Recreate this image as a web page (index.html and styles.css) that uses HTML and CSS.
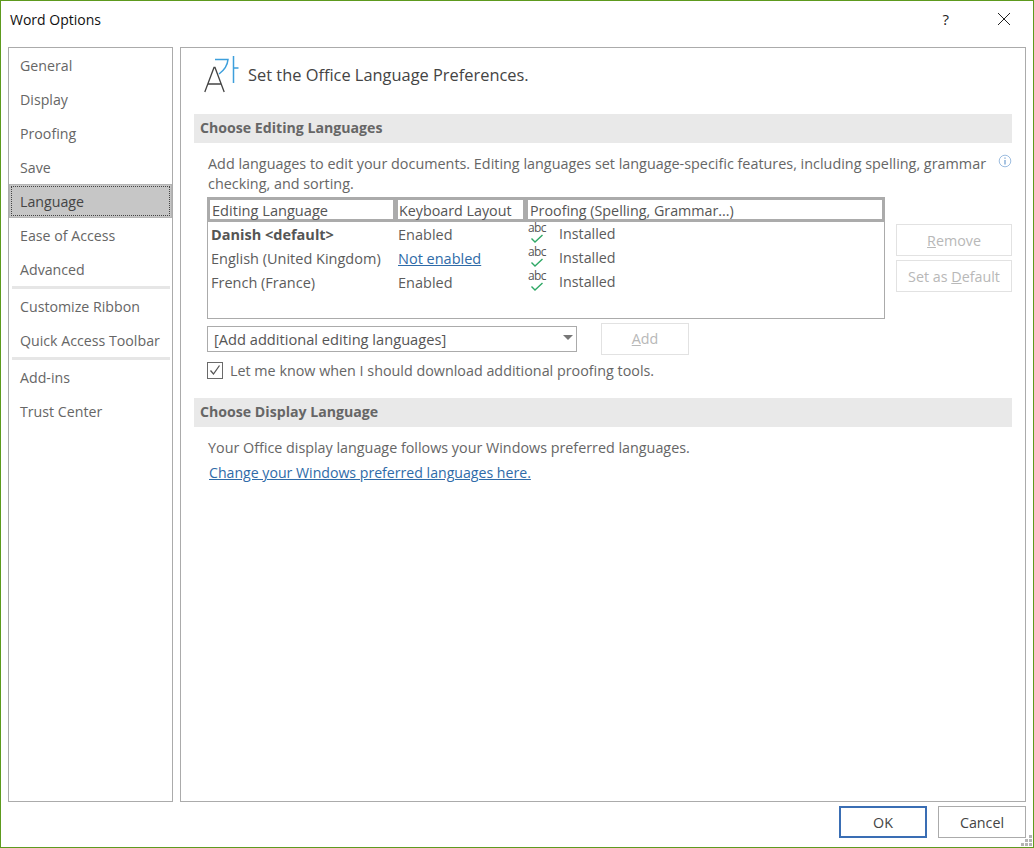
FILE: index.html
```html
<!DOCTYPE html>
<html lang="en">
<head>
<meta charset="utf-8">
<title>Word Options</title>
<link rel="stylesheet" href="styles.css">
</head>
<body>
<div class="window">
  <header class="titlebar">
    <span class="wintitle">Word Options</span>
    <span class="help">?</span>
    <svg class="close" width="14" height="14" viewBox="0 0 14 14"><path d="M1 1 L13 13 M13 1 L1 13" stroke="#222" stroke-width="1" fill="none"/></svg>
  </header>
  <div class="content">
    <nav class="nav">
      <a class="navitem">General</a>
      <a class="navitem">Display</a>
      <a class="navitem">Proofing</a>
      <a class="navitem">Save</a>
      <a class="navitem active"><span class="focus">Language</span></a>
      <a class="navitem">Ease of Access</a>
      <a class="navitem">Advanced</a>
      <div class="navsep"></div>
      <a class="navitem">Customize Ribbon</a>
      <a class="navitem">Quick Access Toolbar</a>
      <div class="navsep"></div>
      <a class="navitem">Add-ins</a>
      <a class="navitem">Trust Center</a>
    </nav>
    <main class="main">
      <div class="pagehead">
        <svg class="langicon" width="36" height="38" viewBox="0 0 36 38" fill="none">
          <path d="M0.800 36 L10 11.500 L11 11.500 L20.200 36 M3.500 28 L17.500 28" stroke="#444" stroke-width="1.300"/>
          <path d="M11 3.500 L24 3.500 C23.500 9 20.500 14 15 18 M29.500 0 L29.500 27 M29.500 12 L34.500 12" stroke="#3d9fdc" stroke-width="1.500"/>
        </svg>
        <span class="pagetitle">Set the Office Language Preferences.</span>
      </div>
      <h2 class="sectionbar">Choose Editing Languages</h2>
      <div class="descrow">
        <p class="desc">Add languages to edit your documents. Editing languages set language-specific features, including spelling, grammar checking, and sorting.</p>
        <svg class="info" width="14" height="14" viewBox="0 0 14 14" fill="none">
          <circle cx="7" cy="7" r="5.800" stroke="#9dbde0" stroke-width="1"/>
          <path d="M7 6 L7 10.500 M7 3.500 L7 4.800" stroke="#6f9dcf" stroke-width="1.200"/>
        </svg>
      </div>
      <div class="editrow">
        <div class="langtable">
          <div class="thead">
            <div class="th th1">Editing Language</div>
            <div class="th th2">Keyboard Layout</div>
            <div class="th th3">Proofing (Spelling, Grammar...)</div>
          </div>
          <div class="trow">
            <div class="td1 strong">Danish &lt;default&gt;</div>
            <div class="td2">Enabled</div>
            <div class="td3"><span class="abc"><span class="abctext">abc</span><svg width="14" height="9" viewBox="0 0 14 9" fill="none"><path d="M1.500 4.500 L5 8 L12.500 1" stroke="#2fa866" stroke-width="1.400"/></svg></span>Installed</div>
          </div>
          <div class="trow">
            <div class="td1">English (United Kingdom)</div>
            <div class="td2"><span class="link">Not enabled</span></div>
            <div class="td3"><span class="abc"><span class="abctext">abc</span><svg width="14" height="9" viewBox="0 0 14 9" fill="none"><path d="M1.500 4.500 L5 8 L12.500 1" stroke="#2fa866" stroke-width="1.400"/></svg></span>Installed</div>
          </div>
          <div class="trow">
            <div class="td1">French (France)</div>
            <div class="td2">Enabled</div>
            <div class="td3"><span class="abc"><span class="abctext">abc</span><svg width="14" height="9" viewBox="0 0 14 9" fill="none"><path d="M1.500 4.500 L5 8 L12.500 1" stroke="#2fa866" stroke-width="1.400"/></svg></span>Installed</div>
          </div>
        </div>
        <div class="sidebtns">
          <button class="btn disabled wide"><u>R</u>emove</button>
          <button class="btn disabled wide">Set as <u>D</u>efault</button>
        </div>
      </div>
      <div class="addrow">
        <div class="select">
          <span>[Add additional editing languages]</span>
          <span class="arrow"></span>
        </div>
        <button class="btn disabled addbtn"><u>A</u>dd</button>
      </div>
      <label class="check">
        <span class="box"><svg width="12" height="12" viewBox="0 0 12 12" fill="none"><path d="M1.500 6.500 L4.500 10 L10.500 1.500" stroke="#555" stroke-width="1.300"/></svg></span>
        Let me know when I should download additional proofing tools.
      </label>
      <h2 class="sectionbar second">Choose Display Language</h2>
      <p class="displaytext">Your Office display language follows your Windows preferred languages.</p>
      <p class="displaylink"><span class="link">Change your Windows preferred languages here.</span></p>
    </main>
  </div>
  <footer class="footer">
    <button class="btn footbtn default">OK</button>
    <button class="btn footbtn">Cancel</button>
    <svg class="grip" width="11" height="11" viewBox="0 0 11 11" fill="#b4b4b4">
      <rect x="8" y="0" width="3" height="3"/><rect x="4" y="4" width="3" height="3"/><rect x="8" y="4" width="3" height="3"/><rect x="0" y="8" width="3" height="3"/><rect x="4" y="8" width="3" height="3"/><rect x="8" y="8" width="3" height="3"/>
    </svg>
  </footer>
</div>
</body>
</html>
```
FILE: styles.css
```css
* { box-sizing: border-box; }
html, body { margin: 0; padding: 0; height: 100%; }
body {
  font-family: "Open Sans", "Noto Sans", sans-serif;
  font-size: 14.3px;
  color: #5c5c5c;
  background: #fff;
}
.window {
  width: 1034px;
  height: 848px;
  border: 1px solid #5d9a1e;
  display: flex;
  flex-direction: column;
  padding: 0 7px;
  position: relative;
}
.titlebar {
  height: 46px;
  display: flex;
  align-items: center;
  padding: 0 0 10px 2px;
  flex: none;
}
.wintitle { color: #111; font-size: 14px; flex: 1; }
.help { color: #222; font-size: 15px; margin-right: 48px; }
.close { margin-right: 15px; }
.content { flex: 1; display: flex; gap: 7px; min-height: 0; }
.nav {
  width: 165px;
  flex: none;
  border: 1px solid #ababab;
  font-size: 14.2px;
}
.navitem {
  display: flex;
  align-items: center;
  height: 34px;
  padding-left: 11px;
  color: #666;
}
.navitem.active {
  background: #c6c6c6;
  color: #444;
  padding: 1px;
  border: 1px solid #b4b4b4;
}
.focus {
  display: flex;
  align-items: center;
  width: 100%;
  height: 100%;
  padding-left: 8px;
  border: 1px dotted #444;
}
.navsep { height: 3px; background: #e6e6e6; margin: 0 2px 0 3px; }
.main {
  flex: 1;
  border: 1px solid #ababab;
  padding: 0 13px;
  min-width: 0;
}
.pagehead { display: flex; align-items: flex-start; height: 66px; padding: 8px 0 0 10px; }
.langicon { flex: none; }
.pagetitle { margin: 7px 0 0 8px; font-size: 16.4px; line-height: 24px; color: #444; }
.sectionbar {
  margin: 0;
  height: 29px;
  line-height: 27px;
  background: #e9e9e9;
  font-size: 14.15px;
  font-weight: 700;
  color: #666;
  padding-left: 6px;
}
.sectionbar.second { margin-top: 19px; }
.descrow { display: flex; padding: 11px 0 0 14px; height: 54px; position: relative; }
.desc { margin: 0; width: 790px; line-height: 20px; color: #666; font-size: 14.39px; }
.info { position: absolute; right: 0; top: 11px; }
.editrow { display: flex; gap: 11px; padding-left: 13px; }
.langtable { width: 678px; height: 122px; border: 1px solid #ababab; border-top: 0; }
.thead { display: flex; margin-left: -1px; margin-right: -1px; }
.th {
  height: 25px;
  border: 3px solid #ababab;
  color: #555;
  line-height: 21px;
  padding-left: 2px;
  font-size: 14.3px;
  white-space: nowrap;
}
.th1 { width: 189px; font-size: 14.6px; }
.th2 { width: 131px; margin-left: -1px; padding-left: 1px; }
.th3 { flex: 1; margin-left: -1px; }
.trow { display: flex; height: 24px; align-items: center; padding-left: 3px; font-size: 14.5px; }
.td1 { width: 187px; white-space: nowrap; }
.strong { font-weight: 700; color: #555; }
.td2 { width: 130px; white-space: nowrap; }
.td3 { display: flex; align-items: center; white-space: nowrap; font-size: 14.3px; margin-bottom: 2px; }
.abc { display: flex; flex-direction: column; align-items: center; width: 18px; margin: 0 13px 1px 0; }
.abctext { font-size: 12px; line-height: 12px; color: #555; letter-spacing: -0.6px; }
.abc svg { display: block; }
.link { color: #2f6ba8; text-decoration: underline; }
.displaylink .link { font-size: 14.13px; }
.sidebtns { display: flex; flex-direction: column; gap: 4px; padding-top: 27px; }
.btn {
  font: inherit;
  background: #fff;
  border: 1px solid #ababab;
  color: #444;
  padding: 0;
}
.btn.disabled { border-color: #e2e2e2; color: #b8b8b8; }
.wide { width: 116px; height: 32px; }
.addrow { display: flex; align-items: center; margin-top: 3px; padding-left: 13px; height: 33px; }
.select {
  width: 370px;
  height: 26px;
  border: 1px solid #ababab;
  display: flex;
  align-items: center;
  justify-content: space-between;
  padding: 0 0 0 6px;
  color: #555;
  font-size: 14.65px;
}
.arrow {
  border-left: 5px solid transparent;
  border-right: 5px solid transparent;
  border-top: 5px solid #777;
  margin: 0 3px 2px 0;
}
.addbtn { width: 88px; height: 32px; margin-left: 24px; }
.check { display: flex; align-items: center; padding-left: 13px; height: 18px; margin-top: 6px; color: #666; font-size: 14.33px; }
.box {
  width: 16px;
  height: 17px;
  border: 1px solid #6a6a6a;
  display: flex;
  align-items: center;
  justify-content: center;
  margin-right: 7px;
}
.displaytext { margin: 11px 0 0 14px; line-height: 20px; color: #666; font-size: 14.33px; }
.displaylink { margin: 5px 0 0 15px; line-height: 20px; }
.footer {
  flex: none;
  height: 45px;
  display: flex;
  justify-content: flex-end;
  gap: 11px;
  padding-top: 4px;
  position: relative;
}
.footbtn { width: 88px; height: 32px; color: #444; padding-top: 1px; }
.footbtn.default { border: 2px solid #3a6eb4; }
.grip { position: absolute; right: -6px; bottom: 1px; }
```
